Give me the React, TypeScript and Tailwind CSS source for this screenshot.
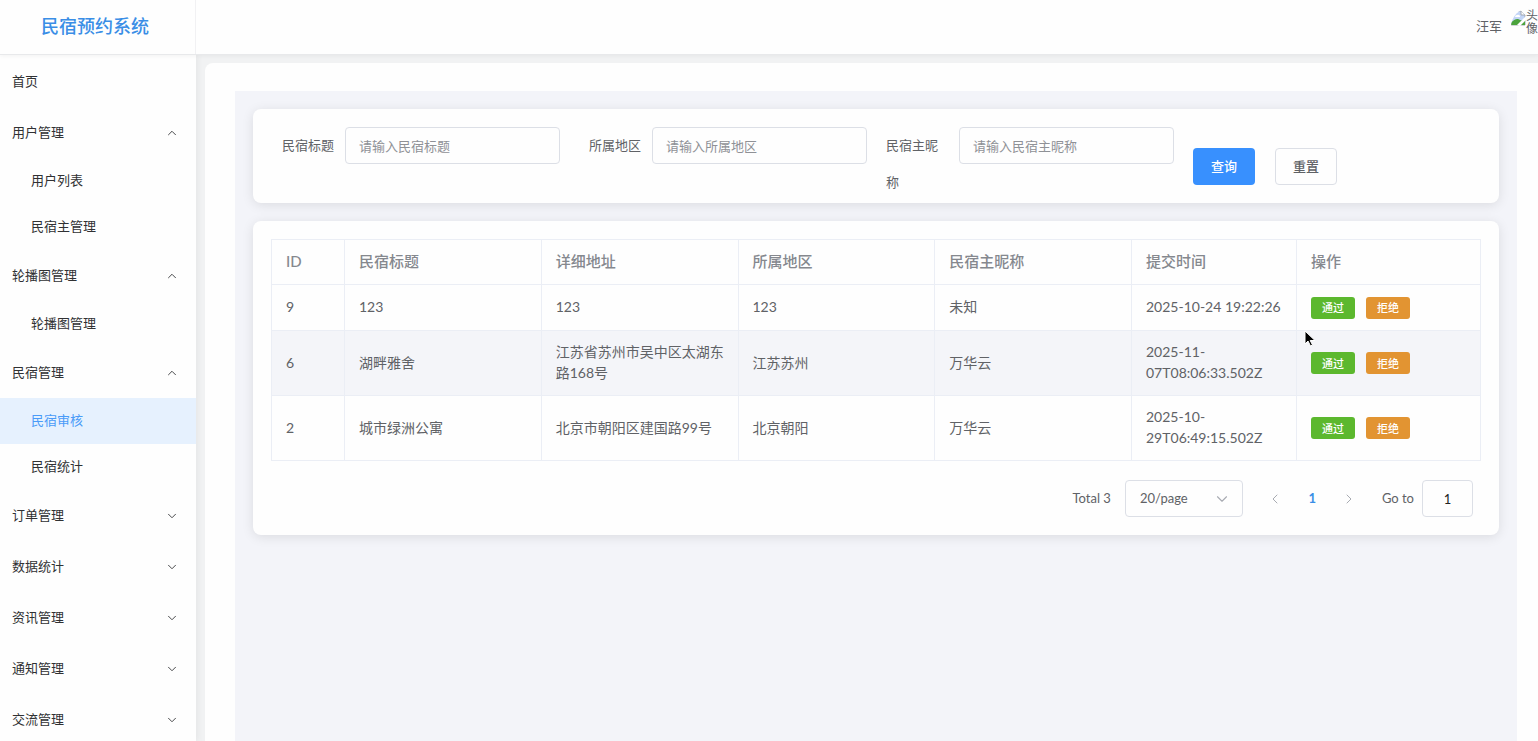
import { useState } from "react";
import { ChevronDown, ChevronLeft, ChevronRight, ChevronUp } from "lucide-react";

type Menu = { title: string; children?: string[] };

const menus: Menu[] = [
    { title: "用户管理", children: ["用户列表", "民宿主管理"] },
    { title: "轮播图管理", children: ["轮播图管理"] },
    { title: "民宿管理", children: ["民宿审核", "民宿统计"] },
    { title: "订单管理" },
    { title: "数据统计" },
    { title: "资讯管理" },
    { title: "通知管理" },
    { title: "交流管理" },
];

const fields = [
    { id: "title", label: "民宿标题", placeholder: "请输入民宿标题" },
    { id: "area", label: "所属地区", placeholder: "请输入所属地区" },
    { id: "owner", label: "民宿主昵称", placeholder: "请输入民宿主昵称" },
];

const columns = ["ID", "民宿标题", "详细地址", "所属地区", "民宿主昵称", "提交时间", "操作"];

const rows = [
    { id: 9, title: "123", address: "123", area: "123", owner: "未知", time: "2025-10-24 19:22:26" },
    { id: 6, title: "湖畔雅舍", address: "江苏省苏州市吴中区太湖东路168号", area: "江苏苏州", owner: "万华云", time: "2025-11-07T08:06:33.502Z" },
    { id: 2, title: "城市绿洲公寓", address: "北京市朝阳区建国路99号", area: "北京朝阳", owner: "万华云", time: "2025-10-29T06:49:15.502Z" },
];

function Sidebar() {
    const [opened, setOpened] = useState(["用户管理", "轮播图管理", "民宿管理"]);
    const [active, setActive] = useState("民宿审核");

    const toggle = (title: string) => {
        setOpened(opened.includes(title) ? opened.filter((t) => t !== title) : [...opened, title]);
    }

    return (
        <aside className="z-10 w-[196px] shrink-0 overflow-hidden bg-[#fefefe] pt-px text-[13px] text-[#303133] shadow-[2px_0_6px_rgba(0,0,0,0.05)]">
            <nav>
                <a href="#home" className="flex h-[51px] items-center px-3">首页</a>
                {menus.map((menu) => (
                    <div key={menu.title}>
                        <button onClick={() => toggle(menu.title)} className="flex h-[51px] w-full items-center justify-between pr-[17px] pl-3">
                            {menu.title}
                            {opened.includes(menu.title) ? <ChevronUp size={14} strokeWidth={1.5} /> : <ChevronDown size={14} strokeWidth={1.5} />}
                        </button>
                        {opened.includes(menu.title) && menu.children?.map((child) => (
                            <a
                                key={child}
                                href="#page"
                                onClick={() => setActive(child)}
                                className={child === active ? "flex h-[46px] items-center bg-[#e6f1fe] pl-[31px] text-[#4a9bf8]" : "flex h-[46px] items-center pl-[31px]"}
                            >
                                {child}
                            </a>
                        ))}
                    </div>
                ))}
            </nav>
        </aside>
    )
}

// broken image placeholder with its alt text
function Avatar() {
    return (
        <div className="flex h-[38px] w-[27px] shrink-0 overflow-hidden rounded-l-full text-xs leading-[13px]">
            <svg width="15" height="16" viewBox="0 0 15 16" className="mt-[2px] shrink-0">
                <path d="M0 1h10l4 4v10H0z" fill="#c3d5f7" stroke="#a3a9b3" />
                <path d="M10 1v4h4" fill="#fff" stroke="#a3a9b3" />
                <path d="M4 7a2 2 0 0 1 2-2 2 2 0 0 1 3 2z" fill="#fff" />
                <path d="M0 15v-2c3-4 7-5 9-3l5 1v4z" fill="#4ba33c" />
                <path d="M6 15L15 6v4l-6 6z" fill="#fff" />
            </svg>
            <span className="w-3 pt-px">头像</span>
        </div>
    )
}

function SearchForm() {
    return (
        <form onSubmit={(e) => e.preventDefault()} className="flex rounded-lg bg-[#fefefe] px-[19px] pt-[18px] pb-[2px] text-[13px] shadow-[0_2px_12px_rgba(0,0,0,0.1)]">
            {fields.map((field) => (
                <div key={field.id} className="mr-[19px] flex">
                    <label htmlFor={field.id} className="flex w-[73px] justify-end pr-[11px] leading-[37px]">{field.label}</label>
                    <input
                        id={field.id}
                        placeholder={field.placeholder}
                        className="h-[37px] w-[215px] rounded border border-[#dcdfe6] px-[13px] outline-none placeholder:text-[#8f9196]"
                    />
                </div>
            ))}
            <div className="mb-4 flex gap-5 self-end font-medium">
                <button type="submit" className="h-[37px] w-[62px] rounded bg-[#3890fe] text-white">查询</button>
                <button type="reset" className="h-[37px] w-[62px] rounded border border-[#dcdfe6]">重置</button>
            </div>
        </form>
    )
}

function ReviewTable() {
    return (
        <table className="w-full table-fixed border-collapse text-left text-sm leading-[21px]">
            <colgroup>
                <col className="w-[73px]" />
                <col />
                <col />
                <col />
                <col />
                <col className="w-[165px]" />
                <col className="w-[184px]" />
            </colgroup>
            <thead>
                <tr className="h-[45px] text-[15px] text-[#85888e]">
                    {columns.map((name) => (
                        <th key={name} className="border border-[#ebeef5] px-[14px] pb-[2px] font-medium">{name}</th>
                    ))}
                </tr>
            </thead>
            <tbody>
                {rows.map((row) => (
                    <tr key={row.id} className="h-[46px] even:bg-[#f4f5f9]">
                        {Object.values(row).map((value, i) => (
                            <td key={i} className="border border-[#ebeef5] pt-[10px] pr-3 pb-3 pl-[14px]">{value}</td>
                        ))}
                        <td className="border border-[#ebeef5] px-[14px]">
                            <div className="flex gap-[11px] text-[11px] font-medium text-white">
                                <button className="h-[22px] w-11 rounded-[3px] bg-[#5cb82e]">通过</button>
                                <button className="h-[22px] w-11 rounded-[3px] bg-[#e29432]">拒绝</button>
                            </div>
                        </td>
                    </tr>
                ))}
            </tbody>
        </table>
    )
}

function Pagination() {
    const [page, setPage] = useState("1");

    return (
        <div className="mt-[19px] mr-2 flex items-center justify-end text-[13px]">
            <span>Total 3</span>
            <div className="relative mx-[14px]">
                <select aria-label="page size" className="h-[37px] w-[118px] appearance-none rounded border border-[#dcdfe6] px-[14px] outline-none">
                    <option>20/page</option>
                    <option>50/page</option>
                </select>
                <ChevronDown size={18} strokeWidth={1.5} className="pointer-events-none absolute top-[10px] right-3 text-[#a8abb2]" />
            </div>
            <button aria-label="previous" className="flex size-[37px] items-center justify-center text-[#a8abb2]"><ChevronLeft size={16} strokeWidth={1.5} /></button>
            <button className="size-[37px] font-bold text-[#3a8ee6]">1</button>
            <button aria-label="next" className="flex size-[37px] items-center justify-center text-[#a8abb2]"><ChevronRight size={16} strokeWidth={1.5} /></button>
            <label htmlFor="goto" className="mr-2 ml-[14px]">Go to</label>
            <input id="goto" value={page} onChange={(e) => setPage(e.target.value)} className="h-[37px] w-[51px] rounded border border-[#dcdfe6] text-center text-[#222] outline-none" />
        </div>
    )
}

export default function App() {
    return (
        <div className="flex h-screen flex-col overflow-hidden bg-[#f1f2f3] font-['Lato','Noto_Sans_CJK_SC',sans-serif] text-[#606266]">
            <header className="z-20 flex h-[55px] shrink-0 border-b border-[#e8e9eb] bg-[#fefefe] shadow-[0_1px_4px_rgba(0,0,0,0.05)]">
                <h1 className="flex w-[196px] shrink-0 items-center justify-center border-r border-[#f1f1f3] pr-[5px] pb-[2px] text-lg font-medium text-[#3a8ee6]">民宿预约系统</h1>
                <div className="flex flex-1 items-center justify-end gap-[9px] text-[13px]">
                    <span>汪军</span>
                    <Avatar />
                </div>
            </header>
            <div className="flex min-h-0 flex-1">
                <Sidebar />
                <main className="mt-2 ml-[9px] flex min-w-0 flex-1 rounded-tl-lg bg-[#fefefe] pt-7 pr-[21px] pl-[30px]">
                    <div className="flex min-w-0 flex-1 flex-col gap-[18px] bg-[#f3f4f9] p-[18px]">
                        <SearchForm />
                        <section className="rounded-lg bg-[#fefefe] p-[18px] shadow-[0_2px_12px_rgba(0,0,0,0.1)]">
                            <ReviewTable />
                            <Pagination />
                        </section>
                    </div>
                </main>
            </div>
            <svg width="12" height="18" viewBox="0 0 12 18" className="pointer-events-none absolute top-[330px] left-[1304px] z-30">
                <path d="M1 1v13l3-3 2.500 5 2-1-2.300-4.500H11z" fill="#000" stroke="#fff" />
            </svg>
        </div>
    )
}
